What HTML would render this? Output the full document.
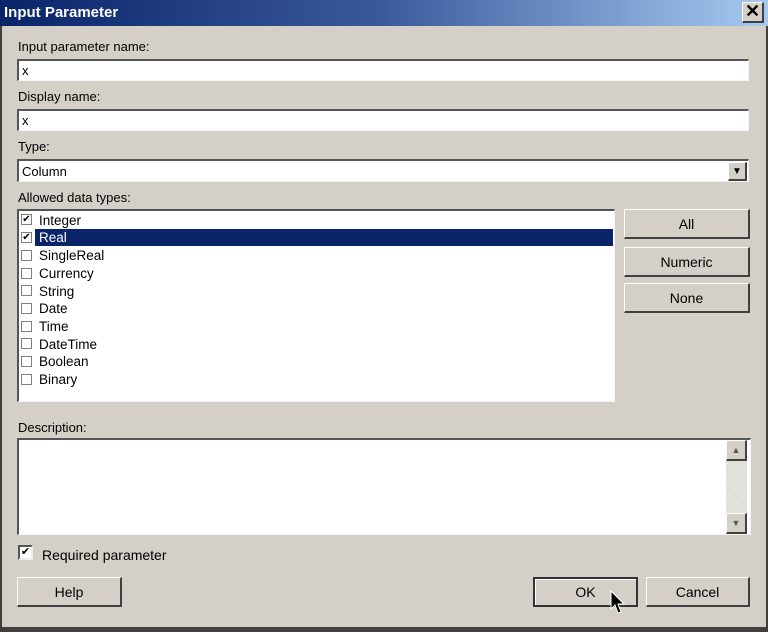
<html><head><style>
body{margin:0;width:768px;height:632px;background:#d4d0c8;font-family:"Liberation Sans",sans-serif;font-size:13px;color:#000;position:relative;overflow:hidden}
.a{position:absolute}
.t{position:absolute;white-space:nowrap}
.in{position:absolute;background:#fff;border-top:2px solid #555;border-left:2px solid #555;border-bottom:1px solid #f4f4f4;border-right:1px solid #f4f4f4;box-sizing:border-box}
.btn{position:absolute;background:#d4d0c8;border-top:1px solid #fff;border-left:1px solid #fff;border-right:2px solid #404040;border-bottom:2px solid #404040;box-sizing:border-box;text-align:center;font-size:14px}
.cb{position:absolute;left:21px;width:11px;height:11px;border:1px solid #808080;background:#fff;box-sizing:border-box;font-size:10px;line-height:9px;text-align:center}
.it{position:absolute;left:39px;font-size:13.5px}
</style></head><body>
<div class="a" style="left:0;top:0;width:768px;height:26px;background:linear-gradient(90deg,#0a246a 0%,#3a5a9c 50%,#a6caf0 100%)"></div>
<div class="t" style="left:4px;top:4px;color:#fff;font-weight:bold;font-size:15px">Input Parameter</div>
<div class="btn" style="left:742px;top:2px;width:22px;height:21px;font-size:18px;line-height:17px;font-weight:bold">✕</div>
<div class="a" style="left:0;top:26px;width:2px;height:606px;background:#404040"></div>
<div class="a" style="left:766px;top:26px;width:2px;height:606px;background:#404040"></div>
<div class="a" style="left:0;top:627px;width:768px;height:5px;background:#404040"></div>

<div class="t" style="left:18px;top:39px">Input parameter name:</div>
<div class="in" style="left:17px;top:59px;width:732px;height:22px"><span class="t" style="left:3px;top:2px">x</span></div>
<div class="t" style="left:18px;top:89px">Display name:</div>
<div class="in" style="left:17px;top:109px;width:732px;height:22px"><span class="t" style="left:3px;top:2px">x</span></div>
<div class="t" style="left:18px;top:139px">Type:</div>
<div class="in" style="left:17px;top:159px;width:732px;height:23px"><span class="t" style="left:3px;top:3px">Column</span>
<div class="btn" style="left:709px;top:1px;width:19px;height:19px;font-size:10px;line-height:17px">▼</div></div>
<div class="t" style="left:18px;top:190px">Allowed data types:</div>
<div class="in" style="left:17px;top:209px;width:598px;height:193px"></div>
<div class="a" style="left:35px;top:229px;width:578px;height:17px;background:#0a246a"></div>
<div class="cb" style="top:214px">✔</div><div class="it" style="top:213px">Integer</div>
<div class="cb" style="top:232px">✔</div><div class="it" style="top:230px;color:#fff">Real</div>
<div class="cb" style="top:250px"></div><div class="it" style="top:248px">SingleReal</div>
<div class="cb" style="top:268px"></div><div class="it" style="top:266px">Currency</div>
<div class="cb" style="top:285px"></div><div class="it" style="top:284px">String</div>
<div class="cb" style="top:303px"></div><div class="it" style="top:301px">Date</div>
<div class="cb" style="top:321px"></div><div class="it" style="top:319px">Time</div>
<div class="cb" style="top:338px"></div><div class="it" style="top:337px">DateTime</div>
<div class="cb" style="top:356px"></div><div class="it" style="top:354px">Boolean</div>
<div class="cb" style="top:374px"></div><div class="it" style="top:372px">Binary</div>
<div class="btn" style="left:624px;top:209px;width:126px;height:30px;line-height:28px">All</div>
<div class="btn" style="left:624px;top:247px;width:126px;height:30px;line-height:28px">Numeric</div>
<div class="btn" style="left:624px;top:283px;width:126px;height:30px;line-height:28px">None</div>
<div class="t" style="left:18px;top:420px">Description:</div>
<div class="in" style="left:17px;top:438px;width:734px;height:97px">
<div class="a" style="left:707px;top:0;width:21px;height:94px;background:repeating-linear-gradient(45deg,#ecebe6 0 1px,#d8d6d0 1px 2px)"></div>
<div class="btn" style="left:707px;top:0;width:21px;height:21px;font-size:9px;line-height:19px;color:#555">▲</div>
<div class="btn" style="left:707px;top:73px;width:21px;height:21px;font-size:9px;line-height:19px;color:#555">▼</div></div>
<div class="a" style="left:18px;top:545px;width:15px;height:15px;border:2px solid #555;border-right-color:#eee;border-bottom-color:#eee;box-sizing:border-box;background:#fff;font-size:11px;line-height:11px;text-align:center">✔</div>
<div class="t" style="left:42px;top:547px;font-size:14px">Required parameter</div>
<div class="btn" style="left:17px;top:577px;width:105px;height:30px;line-height:28px">Help</div>
<div class="btn" style="left:533px;top:577px;width:105px;height:30px;line-height:27px;border:2px solid #333;box-shadow:inset 1px 1px #fff">OK</div>
<div class="btn" style="left:646px;top:577px;width:104px;height:30px;line-height:28px">Cancel</div>
<svg class="a" style="left:610px;top:590px" width="16" height="26" viewBox="0 0 16 26"><path d="M1 1 L1 19 L5 15 L8 23 L11 22 L8 14 L14 14 Z" fill="#000" stroke="#fff" stroke-width="1"/></svg>
</body></html>
